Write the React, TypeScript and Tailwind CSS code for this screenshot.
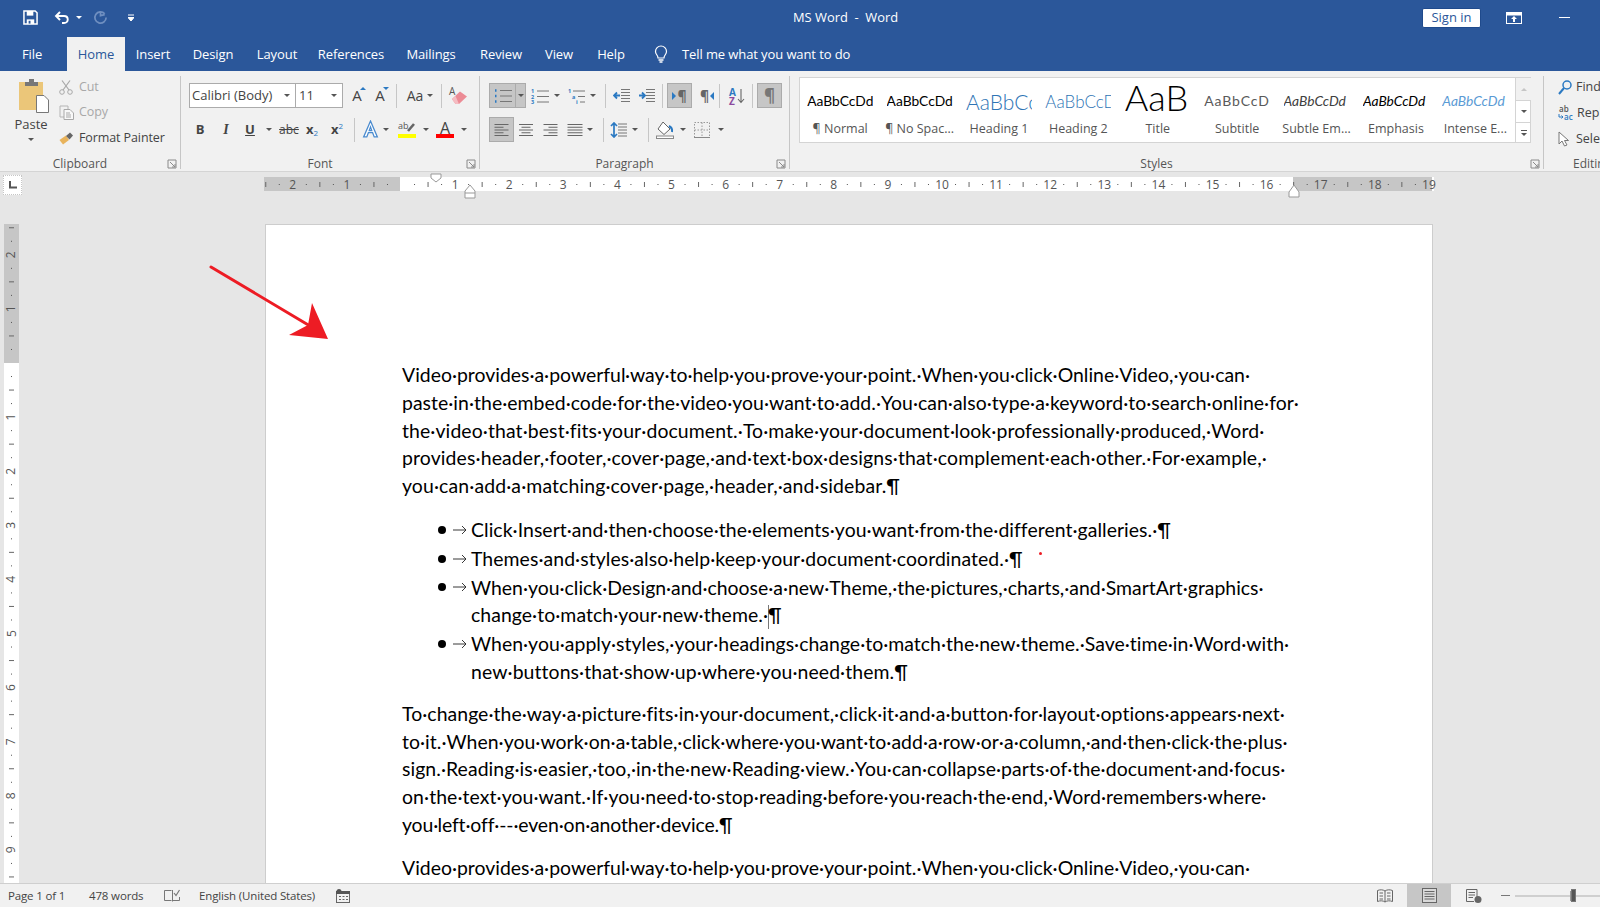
import React from "react";

const Caret = ({ className = "" }: { className?: string }) => (
  <svg viewBox="0 0 6 3" className={"w-[6px] h-[3px] shrink-0 " + className}>
    <polygon points="0,0 6,0 3,3" fill="#555" />
  </svg>
);
const Sep = ({ className = "" }: { className?: string }) => (
  <div className={"w-px h-[24px] bg-[#c6c6c6] shrink-0 " + className} />
);
const Cell = ({ className = "", children }: { className?: string; children?: React.ReactNode }) => (
  <div className={"flex items-center justify-center h-[25px] shrink-0 " + className}>{children}</div>
);
const Box = ({ className = "", children }: { className?: string; children?: React.ReactNode }) => (
  <div className={"flex items-center justify-center h-[25px] shrink-0 bg-[#c6c6c6] border border-[#ababab] " + className}>{children}</div>
);
const Launcher = () => (
  <div className="w-[20px] flex justify-end pr-[3px]">
    <svg viewBox="0 0 10 10" className="w-[10px] h-[10px]">
      <path d="M1 9V1H9V9ZM3 3L8 8M8 5V8H5" fill="none" stroke="#8a8a8a" strokeWidth="1" />
    </svg>
  </div>
);
const GroupLabel = ({ text }: { text: string }) => (
  <div className="flex items-center h-[14px] mt-auto -mb-[2px]">
    <span className="flex-1 text-center text-[12px] leading-[14px] text-[#555]">{text}</span>
    <Launcher />
  </div>
);

const L = ({ rows, x1 = 1, x2 = 17 }: { rows: number[]; x1?: number; x2?: number }) => (
  <>
    {rows.map((y) => (
      <line key={y} x1={x1} x2={x2} y1={y} y2={y} stroke="#777" strokeWidth="1" />
    ))}
  </>
);
const Align = ({ kind }: { kind: "l" | "c" | "r" | "j" }) => {
  const w = [14, 9, 14, 9, 14];
  return (
    <svg viewBox="0 0 16 14" className="w-[16px] h-[14px]">
      {w.map((v, i) => {
        const ww = kind === "j" ? 15 : v;
        const x = kind === "l" || kind === "j" ? 0.5 : kind === "c" ? (16 - ww) / 2 : 15.5 - ww;
        return <line key={i} x1={x} x2={x + ww} y1={1.5 + i * 2.75} y2={1.5 + i * 2.75} stroke="#666" strokeWidth="1" />;
      })}
    </svg>
  );
};

const Ruler = () => {
  const o = 137;
  const u = 54.1;
  const nums = [-2, -1, 1, 2, 3, 4, 5, 6, 7, 8, 9, 10, 11, 12, 13, 14, 15, 16, 17, 18, 19];
  const marks: React.ReactNode[] = [];
  for (let n = -3; n < 19; n++) {
    const c = o + n * u;
    [0.25, 0.5, 0.75].forEach((f) => {
      const x = c + f * u;
      if (x < 1 || x > 1168) return;
      if (f === 0.5) marks.push(<line key={n + "m"} x1={x} x2={x} y1={10} y2={15} stroke="#666" />);
      else marks.push(<rect key={n + "d" + f} x={x - 0.5} y={12} width={1} height={1} fill="#555" />);
    });
  }
  return (
    <svg viewBox="0 0 1180 28" className="w-[1180px] h-[28px] shrink-0 overflow-visible">
      <rect x="0" y="5" width="1170" height="14" fill="#fff" />
      <rect x="0" y="5" width="136" height="14" fill="#c6c6c6" />
      <rect x="1029" y="5" width="139" height="14" fill="#c6c6c6" />
      {marks}
      {nums.map((n) => (
        <text key={n} x={o + n * u} y={16.5} textAnchor="middle" fontSize="12" fill="#555" fontFamily="Open Sans">
          {Math.abs(n)}
        </text>
      ))}
      <path d="M167 2H177V6L172 10L167 6Z" fill="#fff" stroke="#999" />
      <path d="M201 19L206 13L211 19V26H201ZM201 21H211" fill="#fff" stroke="#999" />
      <path d="M1025 20L1030 13L1035 20V25H1025Z" fill="#fff" stroke="#999" />
    </svg>
  );
};
const VRuler = () => {
  const o = 139;
  const u = 54.1;
  const nums = [-2, -1, 1, 2, 3, 4, 5, 6, 7, 8, 9];
  const marks: React.ReactNode[] = [];
  for (let n = -3; n < 10; n++) {
    const c = o + n * u;
    [0.25, 0.5, 0.75].forEach((f) => {
      const y = c + f * u;
      if (y < 1 || y > 660) return;
      if (f === 0.5) marks.push(<line key={n + "m"} y1={y} y2={y} x1={5} x2={10} stroke="#666" />);
      else marks.push(<rect key={n + "d" + f} y={y - 0.5} x={7} width={1} height={1} fill="#555" />);
    });
  }
  return (
    <svg viewBox="0 0 15 660" className="w-[15px] h-[660px] shrink-0 ml-[4px]">
      <rect width="15" height="660" fill="#fff" />
      <rect width="15" height="139" fill="#c6c6c6" />
      {marks}
      {nums.map((n) => {
        const y = o + n * u;
        return (
          <text key={n} transform={`rotate(-90 7.5 ${y})`} x={7.5} y={y + 4} textAnchor="middle" fontSize="12" fill="#555" fontFamily="Open Sans">
            {Math.abs(n)}
          </text>
        );
      })}
    </svg>
  );
};

const p1 = [
  { t: "Video·provides·a·powerful·way·to·help·you·prove·your·point.·When·you·click·Online·Video,·you·can·", c: "" },
  { t: "paste·in·the·embed·code·for·the·video·you·want·to·add.·You·can·also·type·a·keyword·to·search·online·for·", c: "tracking-[0.04px]" },
  { t: "the·video·that·best·fits·your·document.·To·make·your·document·look·professionally·produced,·Word·", c: "tracking-[0.105px]" },
  { t: "provides·header,·footer,·cover·page,·and·text·box·designs·that·complement·each·other.·For·example,·", c: "tracking-[0.134px]" },
  { t: "you·can·add·a·matching·cover·page,·header,·and·sidebar.¶", c: "tracking-[0.13px]" },
];
const p2 = [
  { t: "To·change·the·way·a·picture·fits·in·your·document,·click·it·and·a·button·for·layout·options·appears·next·", c: "tracking-[0.06px]" },
  { t: "to·it.·When·you·work·on·a·table,·click·where·you·want·to·add·a·row·or·a·column,·and·then·click·the·plus·", c: "tracking-[0.04px]" },
  { t: "sign.·Reading·is·easier,·too,·in·the·new·Reading·view.·You·can·collapse·parts·of·the·document·and·focus·", c: "tracking-[0.07px]" },
  { t: "on·the·text·you·want.·If·you·need·to·stop·reading·before·you·reach·the·end,·Word·remembers·where·", c: "tracking-[0.085px]" },
  { t: "you·left·off·--·even·on·another·device.¶", c: "tracking-[-0.13px]" },
];
const Bullet = ({ children }: { children: React.ReactNode }) => (
  <div className="flex mt-[1px]">
    <div className="w-[69px] h-[27.8px] flex items-center shrink-0">
      <div className="ml-[36px] w-[8px] h-[8px] rounded-full bg-black" />
      <svg viewBox="0 0 14 10" className="ml-[7px] w-[14px] h-[10px]">
        <path d="M0 5H13M9 1L13 5L9 9" fill="none" stroke="#222" strokeWidth="0.9" />
      </svg>
    </div>
    <div>{children}</div>
  </div>
);

const styles = [
  { l: "¶ Normal", p: "AaBbCcDd", c: "text-[13.8px] text-black" },
  { l: "¶ No Spac...", p: "AaBbCcDd", c: "text-[13.8px] text-black" },
  { l: "Heading 1", p: "AaBbCcDd", c: "text-[21px] text-[#2e74b5] font-light" },
  { l: "Heading 2", p: "AaBbCcDd", c: "text-[17px] text-[#2e74b5] font-light" },
  { l: "Title", p: "AaB", c: "text-[36px] text-black font-light pb-[8px]" },
  { l: "Subtitle", p: "AaBbCcDd", c: "text-[14px] text-[#5a5a5a] tracking-[0.9px]" },
  { l: "Subtle Em...", p: "AaBbCcDd", c: "text-[13.8px] text-[#404040] italic" },
  { l: "Emphasis", p: "AaBbCcDd", c: "text-[13.8px] text-black italic" },
  { l: "Intense E...", p: "AaBbCcDd", c: "text-[13.8px] text-[#5b9bd5] italic" },
];

const tabs = [
  { t: "Insert", w: "w-[56px]" },
  { t: "Design", w: "w-[64px]" },
  { t: "Layout", w: "w-[64px]" },
  { t: "References", w: "w-[84px]" },
  { t: "Mailings", w: "w-[76px]" },
  { t: "Review", w: "w-[64px]" },
  { t: "View", w: "w-[52px]" },
  { t: "Help", w: "w-[52px]" },
];

export default function App() {
  return (
    <div className="relative w-[1600px] h-[907px] flex flex-col overflow-hidden bg-[#e6e6e6] font-['Open_Sans',sans-serif]">
      {/* Title bar */}
      <div className="h-[37px] pb-[2px] bg-[#2b579a] flex items-center text-white shrink-0">
        <svg viewBox="0 0 16 16" className="ml-[23px] w-[15px] h-[15px] shrink-0">
          <path d="M1 1H13L15 3V15H1Z" fill="none" stroke="#fff" strokeWidth="1.6" />
          <rect x="4" y="1" width="7" height="5" fill="#fff" />
          <rect x="4" y="10" width="8" height="5" fill="#fff" />
          <rect x="6" y="11.5" width="2" height="3" fill="#2b579a" />
        </svg>
        <svg viewBox="0 0 16 16" className="ml-[16px] w-[16px] h-[16px] shrink-0">
          <path d="M6 2L2 6L6 10M2 6H10C15 6 15 13 10 13H8" fill="none" stroke="#fff" strokeWidth="1.9" />
        </svg>
        <Caret className="ml-[6px] [&>polygon]:fill-white" />
        <svg viewBox="0 0 16 16" className="ml-[11px] w-[15px] h-[15px] shrink-0">
          <path d="M12.5 4A6 6 0 1 0 14 8M8 1.5L8 6L12.5 5" fill="none" stroke="#6f8fc0" strokeWidth="1.8" />
        </svg>
        <svg viewBox="0 0 6 7" className="ml-[20px] w-[6px] h-[7px] shrink-0">
          <path d="M0 1H6M0 3.5H6L3 7Z" stroke="#fff" strokeWidth="1" fill="#fff" />
        </svg>
        <div className="ml-[659px] w-[140px] text-[12.9px] whitespace-nowrap">MS Word&nbsp; -&nbsp; Word</div>
        <div className="ml-auto flex items-center">
          <div className="w-[59px] h-[20px] bg-white rounded-[2px] border border-[#1f4a8c] flex items-center justify-center text-[13px] text-[#2b579a]">Sign in</div>
          <svg viewBox="0 0 16 12" className="ml-[25px] w-[16px] h-[12px]">
            <rect x="0.5" y="0.5" width="15" height="11" fill="#2b579a" stroke="#fff" />
            <rect x="0.5" y="0.5" width="15" height="3" fill="#fff" />
            <path d="M8 4L5 7H7V10H9V7H11Z" fill="#fff" />
          </svg>
          <div className="ml-[37px] mr-[30px] w-[11px] h-px bg-white" />
        </div>
      </div>
      {/* Tabs */}
      <div className="h-[34px] pt-[1px] bg-[#2b579a] flex text-white text-[13px] tracking-[-0.1px] shrink-0">
        <div className="w-[67px] pr-[3px] flex items-center justify-center">File</div>
        <div className="w-[58px] -mt-[1px] bg-[#f1f1f1] text-[#2b579a] flex items-center justify-center pt-[1px]">Home</div>
        {tabs.map((t) => (
          <div key={t.t} className={t.w + " flex items-center justify-center"}>
            {t.t}
          </div>
        ))}
        <svg viewBox="0 0 16 20" className="ml-[16px] mt-[7px] w-[16px] h-[20px] shrink-0">
          <path d="M5 13C5 10 2.5 9.5 2.5 6.5A5.5 5.5 0 0 1 13.5 6.5C13.5 9.5 11 10 11 13Z" fill="none" stroke="#fff" strokeWidth="1.2" />
          <path d="M5.5 15H10.5M6.5 17H9.5" stroke="#fff" strokeWidth="1.3" />
        </svg>
        <div className="ml-[13px] flex items-center whitespace-nowrap">Tell me what you want to do</div>
      </div>
      {/* Ribbon */}
      <div className="h-[101px] bg-[#f1f1f1] border-b border-[#d4d4d4] flex pt-[5px] overflow-hidden shrink-0 text-[12.5px] text-[#444]">
        {/* Clipboard */}
        <div className="w-[181px] h-[93px] border-r border-[#c6c6c6] flex flex-col shrink-0">
          <div className="flex">
            <div className="w-[59px] pl-[3px] flex flex-col items-center">
              <svg viewBox="0 0 31 34" className="mt-[3px] ml-[6px] w-[31px] h-[34px]">
                <rect x="0" y="3" width="24" height="28" fill="#ebc679" />
                <path d="M6 7V3H10V0H15V3H19V7Z" fill="#777" />
                <path d="M17.5 16.5H25L29.5 21V33.5H17.5Z" fill="#fff" stroke="#777" />
              </svg>
              <span className="mt-[3px] text-[13px] leading-[16px]">Paste</span>
              <Caret className="mt-[6px]" />
            </div>
            <div className="flex flex-col gap-[3.5px] tracking-[-0.1px]">
              <div className="h-[22px] flex items-center text-[#a8a8a8]">
                <svg viewBox="0 0 14 15" className="w-[14px] h-[15px]">
                  <circle cx="3" cy="12" r="2.3" fill="none" stroke="#a8a8a8" />
                  <circle cx="11" cy="12" r="2.3" fill="none" stroke="#a8a8a8" />
                  <path d="M4 10L11 0.5M10 10L3 0.5" stroke="#a8a8a8" strokeWidth="1.2" />
                </svg>
                <span className="ml-[6px]">Cut</span>
              </div>
              <div className="h-[22px] flex items-center text-[#a8a8a8]">
                <svg viewBox="0 0 15 15" className="w-[15px] h-[15px]">
                  <path d="M9 4V1H1V12H5" fill="none" stroke="#b5b5b5" />
                  <path d="M5 4.5H11L14.5 8V14.5H5Z" fill="#f8f8f8" stroke="#a8a8a8" />
                  <path d="M7 8H11M7 10H12M7 12H12" stroke="#a8a8a8" />
                </svg>
                <span className="ml-[5px]">Copy</span>
              </div>
              <div className="h-[22px] flex items-center">
                <svg viewBox="0 0 15 14" className="w-[15px] h-[14px]">
                  <path d="M0.5 9L7 4.5L10 9L4 13.5Z" fill="#e8b35c" />
                  <path d="M7 5L11 1.5L14 4.5L10.5 8.5Z" fill="#666" />
                </svg>
                <span className="ml-[5px] whitespace-nowrap">Format Painter</span>
              </div>
            </div>
          </div>
          <GroupLabel text="Clipboard" />
        </div>
        {/* Font */}
        <div className="w-[299px] h-[93px] border-r border-[#c6c6c6] flex flex-col shrink-0 pt-[7px]">
          <div className="flex items-center">
            <div className="ml-[8px] w-[107px] h-[25px] bg-white border border-[#ababab] flex items-center pl-[2px] pr-[5px] shrink-0 text-[13px]">
              <span className="flex-1">Calibri (Body)</span>
              <Caret />
            </div>
            <div className="w-[48px] -ml-px h-[25px] bg-white border border-[#ababab] flex items-center pl-[3px] pr-[5px] shrink-0 text-[13px]">
              <span className="flex-1">11</span>
              <Caret />
            </div>
            <Cell className="ml-[2px] w-[24px]">
              <span className="relative text-[15px] leading-none">
                A
                <svg viewBox="0 0 6 3" className="absolute -right-[4px] -top-[1px] w-[6px] h-[3px]"><polygon points="0,3 6,3 3,0" fill="#2b79c2" /></svg>
              </span>
            </Cell>
            <Cell className="w-[22px]">
              <span className="relative text-[15px] leading-none">
                A
                <svg viewBox="0 0 6 3" className="absolute -right-[4px] -top-[1px] w-[6px] h-[3px]"><polygon points="0,0 6,0 3,3" fill="#2b79c2" /></svg>
              </span>
            </Cell>
            <Sep className="ml-[5px]" />
            <Cell className="ml-[6px] w-[24px] text-[14px]">Aa</Cell>
            <Caret />
            <Sep className="ml-[8px]" />
            <Cell className="ml-[4px] w-[24px]">
              <svg viewBox="0 0 20 20" className="w-[20px] h-[20px] overflow-visible">
                <text x="1" y="9" fontSize="10" fill="#555" fontFamily="Open Sans">A</text>
                <path d="M4 13L12 5.5L19 10.5L11 18H7.5Z" fill="#ec8b95" />
                <path d="M4 13L7.5 18H11L7.5 10Z" fill="#f5bcc2" />
              </svg>
            </Cell>
          </div>
          <div className="flex items-center mt-[9px]">
            <Cell className="ml-[8px] w-[22px] font-bold text-[13px]">B</Cell>
            <Cell className="ml-[4px] w-[22px] italic font-bold text-[14px] font-['Liberation_Serif',serif]">I</Cell>
            <Cell className="ml-[2px] w-[22px] font-bold text-[13px] underline">U</Cell>
            <Caret className="ml-[5px]" />
            <Cell className="ml-[5px] w-[24px] text-[12px] line-through">abc</Cell>
            <Cell className="w-[22px] font-bold text-[13px]">
              x<span className="text-[8px] text-[#2b79c2] font-normal mt-[7px]">2</span>
            </Cell>
            <Cell className="ml-[3px] w-[22px] font-bold text-[13px]">
              x<span className="text-[8px] text-[#2b79c2] font-normal -mt-[7px]">2</span>
            </Cell>
            <Sep className="ml-[6px]" />
            <Cell className="ml-[5px] w-[20px]">
              <svg viewBox="0 0 16 18" className="w-[17px] h-[19px]">
                <path d="M8 1L14.5 16H11.5L10 12H6L4.5 16H1.5ZM8 6.5L6.8 10H9.2Z" fill="#fff" stroke="#4a8bcf" strokeWidth="1.2" />
              </svg>
            </Cell>
            <Caret className="ml-[3px]" />
            <Cell className="ml-[7px] w-[22px]">
              <svg viewBox="0 0 18 18" className="w-[18px] h-[18px] overflow-visible">
                <text x="0" y="8" fontSize="9" fill="#555" fontFamily="Open Sans">ab</text>
                <path d="M10 10L16 3" stroke="#666" strokeWidth="2.6" />
                <rect x="0" y="13" width="18" height="4" fill="#ffff00" />
              </svg>
            </Cell>
            <Caret className="ml-[5px]" />
            <Cell className="ml-[5px] w-[22px]">
              <svg viewBox="0 0 18 18" className="w-[18px] h-[18px] overflow-visible">
                <text x="9" y="12.5" textAnchor="middle" fontSize="16" fill="#444" fontFamily="Open Sans">A</text>
                <rect x="0" y="13" width="18" height="4" fill="#ff0000" />
              </svg>
            </Cell>
            <Caret className="ml-[5px]" />
          </div>
          <GroupLabel text="Font" />
        </div>
        {/* Paragraph */}
        <div className="w-[310px] h-[93px] border-r border-[#c6c6c6] flex flex-col shrink-0 pt-[7px]">
          <div className="flex items-center">
            <Box className="ml-[9px] w-[27px]">
              <svg viewBox="0 0 20 16" className="w-[20px] h-[16px]">
                <path d="M2 2.5H3.5M2 8H3.5M2 13.5H3.5" stroke="#2b79c2" strokeWidth="2.4" />
                <L rows={[2.5, 8, 13.5]} x1={7} x2={19} />
              </svg>
            </Box>
            <Box className="w-[11px] -ml-px">
              <Caret />
            </Box>
            <Cell className="ml-[5px] w-[20px]">
              <svg viewBox="0 0 20 16" className="w-[20px] h-[16px] overflow-visible">
                <text x="0" y="5" fontSize="5.5" fill="#2b79c2" fontFamily="Open Sans" fontWeight="700">1</text>
                <text x="0" y="10.5" fontSize="5.5" fill="#2b79c2" fontFamily="Open Sans" fontWeight="700">2</text>
                <text x="0" y="16" fontSize="5.5" fill="#2b79c2" fontFamily="Open Sans" fontWeight="700">3</text>
                <L rows={[3, 8.5, 14]} x1={6} x2={18} />
              </svg>
            </Cell>
            <Caret className="ml-[3px]" />
            <Cell className="ml-[8px] w-[20px]">
              <svg viewBox="0 0 20 16" className="w-[20px] h-[16px] overflow-visible">
                <text x="0" y="5" fontSize="5.5" fill="#2b79c2" fontFamily="Open Sans" fontWeight="700">1</text>
                <text x="4" y="10.5" fontSize="5.5" fill="#2b79c2" fontFamily="Open Sans" fontWeight="700">a</text>
                <text x="8" y="16" fontSize="5.5" fill="#2b79c2" fontFamily="Open Sans" fontWeight="700">i</text>
                <line x1="5" x2="17" y1="3" y2="3" stroke="#777" />
                <line x1="10" x2="17" y1="8.5" y2="8.5" stroke="#777" />
                <line x1="12" x2="17" y1="14" y2="14" stroke="#777" />
              </svg>
            </Cell>
            <Caret className="ml-[2px]" />
            <Sep className="ml-[9px]" />
            <Cell className="ml-[7px] w-[18px]">
              <svg viewBox="0 0 18 15" className="w-[18px] h-[15px]">
                <L rows={[1.5, 4.5, 7.5, 10.5, 13.5]} x1={8} x2={17} />
                <path d="M7 7.5H1M4 4.5L1 7.5L4 10.5" fill="none" stroke="#2b79c2" strokeWidth="1.8" />
              </svg>
            </Cell>
            <Cell className="ml-[7px] w-[18px]">
              <svg viewBox="0 0 18 15" className="w-[18px] h-[15px]">
                <L rows={[1.5, 4.5, 7.5, 10.5, 13.5]} x1={8} x2={17} />
                <path d="M1 7.5H7M4 4.5L7 7.5L4 10.5" fill="none" stroke="#2b79c2" strokeWidth="1.8" />
              </svg>
            </Cell>
            <Sep className="ml-[6px]" />
            <Box className="ml-[4px] w-[25px] gap-[1px]">
              <svg viewBox="0 0 4 8" className="w-[4px] h-[8px]"><polygon points="0,0 4,4 0,8" fill="#2b79c2" /></svg>
              <span className="font-bold text-[14px] leading-none text-[#666]">¶</span>
            </Box>
            <Cell className="ml-[5px] w-[20px] gap-[1px]">
              <span className="font-bold text-[14px] leading-none text-[#666]">¶</span>
              <svg viewBox="0 0 4 8" className="w-[4px] h-[8px]"><polygon points="4,0 0,4 4,8" fill="#2b79c2" /></svg>
            </Cell>
            <Sep className="ml-[2px]" />
            <Cell className="ml-[8px] w-[18px]">
              <svg viewBox="0 0 18 18" className="w-[18px] h-[18px] overflow-visible">
                <text x="1" y="8.5" fontSize="10" fontWeight="700" fill="#2b79c2" fontFamily="Open Sans">A</text>
                <text x="1" y="18" fontSize="10" fontWeight="700" fill="#8c4a9e" fontFamily="Open Sans">Z</text>
                <path d="M13 2V15M10 12L13 15.5L16 12" fill="none" stroke="#666" strokeWidth="1.1" />
              </svg>
            </Cell>
            <Sep className="ml-[6px]" />
            <Box className="ml-[4px] w-[25px]">
              <span className="font-bold text-[17px] leading-none text-[#777]">¶</span>
            </Box>
          </div>
          <div className="flex items-center mt-[9px]">
            <Box className="ml-[9px] w-[25px]"><Align kind="l" /></Box>
            <Cell className="w-[24px]"><Align kind="c" /></Cell>
            <Cell className="w-[24px]"><Align kind="r" /></Cell>
            <Cell className="ml-[1px] w-[24px]"><Align kind="j" /></Cell>
            <Caret />
            <Sep className="ml-[10px]" />
            <Cell className="ml-[6px] w-[18px]">
              <svg viewBox="0 0 18 16" className="w-[18px] h-[16px]">
                <L rows={[2, 5, 8, 11, 14]} x1={8} x2={17} />
                <path d="M4 1V15M1 4L4 1L7 4M1 12L4 15L7 12" fill="none" stroke="#2b79c2" strokeWidth="1.7" />
              </svg>
            </Cell>
            <Caret className="ml-[4px]" />
            <Sep className="ml-[10px]" />
            <Cell className="ml-[6px] w-[20px]">
              <svg viewBox="0 0 18 18" className="w-[18px] h-[18px]">
                <path d="M7 1L14 8L8 13.5L2 8Z" fill="#fff" stroke="#666" />
                <path d="M13 5C15 6 16.5 8 16 11" fill="none" stroke="#2b79c2" strokeWidth="2" />
                <rect x="0.5" y="15" width="17" height="2.5" fill="#fff" stroke="#888" />
              </svg>
            </Cell>
            <Caret className="ml-[5px]" />
            <Cell className="ml-[6px] w-[20px]">
              <svg viewBox="0 0 16 16" className="w-[16px] h-[16px]">
                <path d="M0.5 0.5H15.5V15.5H0.5ZM8 0.5V15.5M0.5 8H15.5" fill="none" stroke="#999" strokeDasharray="1.5 1.5" />
                <line x1="0" x2="16" y1="15.5" y2="15.5" stroke="#888" />
              </svg>
            </Cell>
            <Caret className="ml-[6px]" />
          </div>
          <GroupLabel text="Paragraph" />
        </div>
        {/* Styles */}
        <div className="w-[754px] h-[93px] border-r border-[#c6c6c6] flex flex-col shrink-0">
          <div className="ml-[9px] mt-px w-[732px] h-[66px] bg-white border border-[#d4d4d4] flex pl-[0.5px]">
            {styles.map((s) => (
              <div key={s.l} className="w-[79.4px] flex flex-col items-center shrink-0">
                <div className={"w-[66px] h-[36px] mt-[5px] overflow-hidden flex items-center justify-start whitespace-nowrap font-['Lato',sans-serif] leading-none " + s.c}>{s.p}</div>
                <div className="mt-[2px] text-[12.5px] leading-[16px] text-[#555] whitespace-nowrap">{s.l}</div>
              </div>
            ))}
            <div className="ml-auto w-[16px] flex flex-col border-l border-[#d4d4d4] shrink-0">
              <div className="h-[23px] bg-[#f1f1f1] border-b border-[#d4d4d4] flex items-center justify-center">
                <svg viewBox="0 0 6 3" className="w-[6px] h-[3px]"><polygon points="0,3 6,3 3,0" fill="#c6c6c6" /></svg>
              </div>
              <div className="h-[22px] border-b border-[#d4d4d4] flex items-center justify-center">
                <Caret />
              </div>
              <div className="flex-1 flex flex-col items-center justify-center gap-[2px]">
                <div className="w-[6px] h-px bg-[#555]" />
                <Caret />
              </div>
            </div>
          </div>
          <GroupLabel text="Styles" />
        </div>
        {/* Editing */}
        <div className="flex-1 h-[93px] flex flex-col pl-[14px] whitespace-nowrap">
          <div className="flex flex-col gap-[4px]">
            <div className="h-[22px] flex items-center">
              <svg viewBox="0 0 14 15" className="w-[14px] h-[15px] shrink-0">
                <circle cx="9" cy="5" r="4" fill="none" stroke="#2b79c2" strokeWidth="1.5" />
                <path d="M6 8L1 14" stroke="#2b79c2" strokeWidth="2" />
              </svg>
              <span className="ml-[4px]">Find</span>
            </div>
            <div className="h-[22px] flex items-center">
              <svg viewBox="0 0 16 16" className="w-[16px] h-[16px] shrink-0 overflow-visible">
                <text x="1" y="7" fontSize="8" fill="#555" fontFamily="Open Sans" fontWeight="600">ab</text>
                <text x="6" y="15" fontSize="8" fill="#2b79c2" fontFamily="Open Sans" fontWeight="600">ac</text>
                <path d="M1 9V12H5M3.5 10.5L5 12L3.5 13.5" fill="none" stroke="#2b79c2" />
              </svg>
              <span className="ml-[3px]">Replace</span>
            </div>
            <div className="h-[22px] flex items-center">
              <svg viewBox="0 0 12 16" className="w-[12px] h-[16px] shrink-0">
                <path d="M1 1V13L4 10L6.5 15L9 14L6.5 9.5H10.5Z" fill="#fff" stroke="#777" />
              </svg>
              <span className="ml-[6px]">Select</span>
            </div>
          </div>
          <div className="h-[14px] mt-auto -mb-[2px] pl-[15px] text-[12px] leading-[14px] text-[#555]">Editing</div>
        </div>
      </div>
      {/* Rulers + page */}
      <div className="flex h-[52px] shrink-0">
        <div className="ml-[3px] mt-[3px] w-[19px] h-[20px] bg-white border border-dotted border-[#c6c6c6] flex items-center justify-center shrink-0">
          <svg viewBox="0 0 8 8" className="w-[8px] h-[8px]"><path d="M1 0V6.5H8" fill="none" stroke="#555" strokeWidth="2" /></svg>
        </div>
        <div className="ml-[242px]">
          <Ruler />
        </div>
      </div>
      <div className="flex flex-1 min-h-0 overflow-hidden">
        <VRuler />
        <div className="ml-[246px] w-[1168px] h-[700px] bg-white border border-[#cdcdcd] pt-[136px] pl-[136px] font-['Lato',sans-serif] text-[19.42px] leading-[27.8px] text-black whitespace-nowrap shrink-0">
          {p1.map((l) => (
            <div key={l.t} className={l.c}>{l.t}</div>
          ))}
          <div className="mt-[16px]">
            <Bullet><div className="tracking-[0.05px]">Click·Insert·and·then·choose·the·elements·you·want·from·the·different·galleries.·¶</div></Bullet>
            <Bullet><div className="tracking-[0.07px]">Themes·and·styles·also·help·keep·your·document·coordinated.·¶</div></Bullet>
            <Bullet>
              <div>When·you·click·Design·and·choose·a·new·Theme,·the·pictures,·charts,·and·SmartArt·graphics·</div>
              <div className="h-[27.8px] tracking-[0.06px]">
                change·to·match·your·new·theme.·
                <span className="inline-block w-px h-[24px] bg-[#777] align-middle -mr-px" />¶
              </div>
            </Bullet>
            <Bullet>
              <div className="tracking-[0.035px]">When·you·apply·styles,·your·headings·change·to·match·the·new·theme.·Save·time·in·Word·with·</div>
              <div className="tracking-[0.09px]">new·buttons·that·show·up·where·you·need·them.¶</div>
            </Bullet>
          </div>
          <div className="mt-[14px]">
            {p2.map((l) => (
              <div key={l.t} className={l.c}>{l.t}</div>
            ))}
          </div>
          <div className="mt-[15px]">Video·provides·a·powerful·way·to·help·you·prove·your·point.·When·you·click·Online·Video,·you·can·</div>
        </div>
      </div>
      {/* Status bar */}
      <div className="h-[24px] bg-[#f1f1f1] border-t border-[#cfcfcf] flex items-center text-[11.5px] tracking-[-0.15px] text-[#444] shrink-0 whitespace-nowrap">
        <span className="ml-[8px] w-[58px]">Page 1 of 1</span>
        <span className="ml-[23px] w-[54px]">478 words</span>
        <svg viewBox="0 0 16 13" className="ml-[21px] w-[16px] h-[13px] shrink-0">
          <path d="M7.5 1.5H0.5V11.5H7.5M8.5 12.5V1M8.5 8V11.5H15.5V8" fill="none" stroke="#777" />
          <path d="M10 4L12 6.5L15.5 1" fill="none" stroke="#777" strokeWidth="1.2" />
        </svg>
        <span className="ml-[19px] w-[116px]">English (United States)</span>
        <svg viewBox="0 0 14 14" className="ml-[21px] w-[14px] h-[14px] shrink-0">
          <rect x="0.5" y="2.5" width="13" height="11" fill="none" stroke="#666" />
          <rect x="0" y="2" width="14" height="3" fill="#555" />
          <circle cx="3" cy="2.5" r="2.5" fill="#555" />
          <path d="M3 7.5H5M6.5 7.5H8.5M10 7.5H12M3 10.5H5M6.5 10.5H8.5M10 10.5H12" stroke="#666" />
        </svg>
        <svg viewBox="0 0 16 14" className="ml-auto w-[16px] h-[14px] shrink-0">
          <path d="M8 2C6 .5 3 .5 .5 1.5V12.5C3 11.5 6 11.5 8 13C10 11.5 13 11.5 15.5 12.5V1.5C13 .5 10 .5 8 2ZM8 2V13M2.5 4H6M2.5 7H6M2.5 10H6M10 4H13.5M10 7H13.5M10 10H13.5" fill="none" stroke="#666" />
        </svg>
        <div className="ml-[14px] w-[44px] h-[23px] bg-[#c6c6c6] flex items-center justify-center shrink-0">
          <svg viewBox="0 0 15 15" className="w-[15px] h-[15px]">
            <rect x="0.5" y="0.5" width="14" height="14" fill="#d9d9d9" stroke="#666" />
            <path d="M2.5 3.5H12.5M2.5 6H12.5M2.5 8.5H12.5M2.5 11H12.5" stroke="#666" />
          </svg>
        </div>
        <svg viewBox="0 0 16 14" className="ml-[15px] w-[16px] h-[14px] shrink-0">
          <path d="M11 9V.5H.5V12.5H8" fill="none" stroke="#666" />
          <path d="M2.5 3.5H9M2.5 6H9M2.5 8.5H7" stroke="#666" />
          <circle cx="12" cy="10.5" r="3.5" fill="#666" />
        </svg>
        <div className="ml-[19px] w-[9px] h-px bg-[#777] shrink-0" />
        <div className="ml-[5px] w-[85px] h-[2px] bg-[#cfcfcf] flex items-center shrink-0">
          <div className="ml-[55px] w-px h-[10px] bg-[#999]" />
          <div className="w-[5px] h-[13px] bg-[#555] border border-[#777]" />
        </div>
      </div>
      {/* Annotation overlay */}
      <svg viewBox="0 0 140 90" className="absolute left-[200px] top-[260px] w-[140px] h-[90px] pointer-events-none">
        <path d="M11 7L110 66" stroke="#ed1c24" strokeWidth="3" strokeLinecap="round" />
        <path d="M112 43L128 79L89 75L108 65Z" fill="#ed1c24" />
      </svg>
      <div className="absolute left-[1038.5px] top-[551.5px] w-[3px] h-[3px] rounded-full bg-[#ed1c24]" />
    </div>
  );
}
